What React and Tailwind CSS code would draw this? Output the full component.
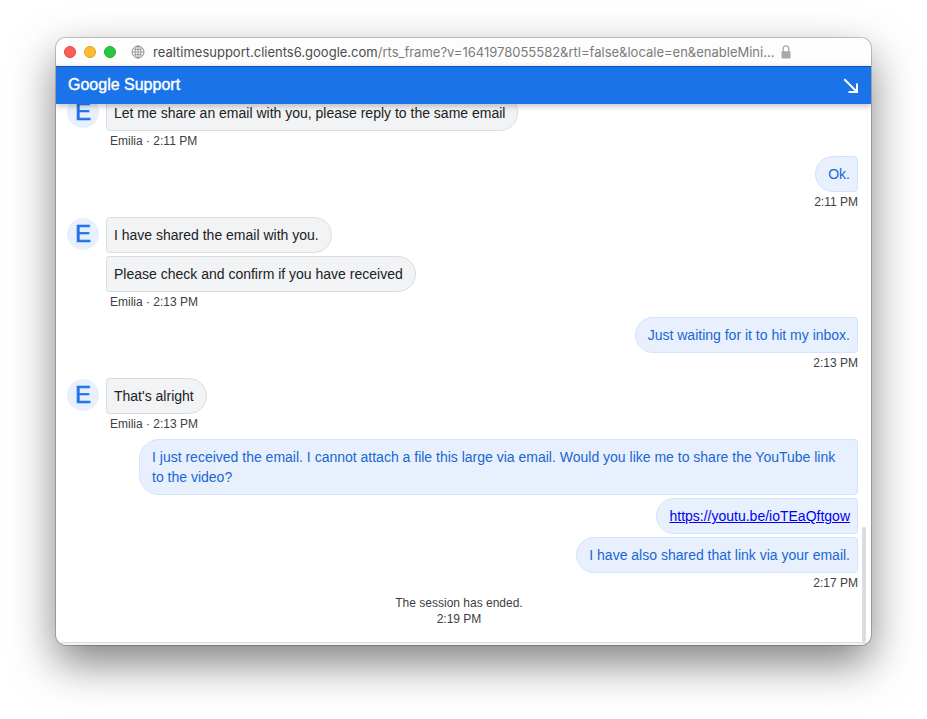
import { clsx } from "clsx";

const groups = [
    { from: "agent", messages: ["Let me share an email with you, please reply to the same email"], time: "2:11 PM" },
    { from: "user", messages: ["Ok."], time: "2:11 PM" },
    {
        from: "agent",
        messages: ["I have shared the email with you.", "Please check and confirm if you have received"],
        time: "2:13 PM",
    },
    { from: "user", messages: ["Just waiting for it to hit my inbox."], time: "2:13 PM" },
    { from: "agent", messages: ["That's alright"], time: "2:13 PM" },
    {
        from: "user",
        messages: [
            "I just received the email. I cannot attach a file this large via email. Would you like me to share the YouTube link to\u00a0the video?",
            "https://youtu.be/ioTEaQftgow",
            "I have also shared that link via your email.",
        ],
        time: "2:17 PM",
    },
];

const GlobeIcon = () => (
    <svg className="size-[14px] shrink-0" viewBox="0 0 14 14" fill="none" stroke="#858585" aria-hidden="true">
        <circle cx="7" cy="7" r="6" strokeWidth="0.9" />
        <ellipse cx="7" cy="7" rx="2.9" ry="6" strokeWidth="0.8" />
        <path d="M7 1v12M1 7h12M2.3 3.7c2.8 1.2 6.6 1.2 9.4 0M2.3 10.3c2.8-1.2 6.6-1.2 9.4 0" strokeWidth="0.8" />
    </svg>
);

const LockIcon = () => (
    <svg className="h-[14px] w-[10px] shrink-0" viewBox="0 0 10 14" aria-hidden="true">
        <path d="M2.2 7V4a2.8 3.1 0 0 1 5.6 0v3" fill="none" stroke="#a9a9a9" strokeWidth="1.3" />
        <rect x="0.5" y="6.3" width="9" height="7.2" rx="1" fill="#a9a9a9" />
    </svg>
);

const TitleBar = () => (
    <div className="flex h-7 shrink-0 items-center bg-[#fdfdfd] px-2">
        <div className="flex shrink-0 gap-2">
            <button aria-label="Close" className="size-3 rounded-full border border-[#e0443e] bg-[#ff5f57]" />
            <button aria-label="Minimize" className="size-3 rounded-full border border-[#dfa023] bg-[#febc2e]" />
            <button aria-label="Zoom" className="size-3 rounded-full border border-[#1dad2b] bg-[#28c840]" />
        </div>
        <div className="ml-[15px] flex min-w-0 items-center">
            <GlobeIcon />
            <p className="ml-2 truncate pt-px font-['Inter',sans-serif] text-[13px] text-[#7b7b7b]">
                <span className="text-[#4c4c4c]">realtimesupport.clients6.google.com</span>
                /rts_frame?v=1641978055582&amp;rtl=false&amp;locale=en&amp;enableMini...
            </p>
            <span className="ml-[7px]">
                <LockIcon />
            </span>
        </div>
    </div>
);

const Header = () => (
    <header className="relative z-10 flex h-[38px] shrink-0 items-center justify-between border-t border-[#0b50b8] bg-[#1a73e8] px-3 text-white shadow-[0_2px_6px_rgba(0,0,0,0.25)]">
        <h1 className="pb-[2px] text-[16px] leading-5 [-webkit-text-stroke:0.4px_white]">Google Support</h1>
        <button aria-label="Minimize chat">
            <svg className="size-4" viewBox="0 0 16 16" fill="none" stroke="currentColor" strokeWidth="2">
                <path d="M1.3 1.3l12.5 12.5M5.5 14H15M14 14.5V5.5" />
            </svg>
        </button>
    </header>
);

const Bubble = ({ text, mine }) => (
    <div
        className={clsx(
            "border py-[7px] text-[14px] leading-5",
            mine
                ? "rounded-l-[20px] rounded-r-[4px] border-[#d2e3fc] bg-[#e8f0fe] pr-[7px] pl-3 text-[#1967d2]"
                : "rounded-l-[4px] rounded-r-[20px] border-[#dadce0] bg-[#f1f3f4] pr-3 pl-[7px] text-[#202124]"
        )}
    >
        {text.startsWith("https://") ? (
            <a href={text} className="text-[#0000ee] underline">
                {text}
            </a>
        ) : (
            text
        )}
    </div>
);

const MessageGroup = ({ group }) => {
    const mine = group.from === "user";

    return (
        <div className={clsx("flex items-start gap-[7px]", mine && "justify-end pl-[72px]")}>
            {!mine && (
                <div className="mt-px flex size-8 shrink-0 items-center justify-center rounded-full bg-[#e8f0fe] text-[24px] leading-8 text-[#1a73e8] [-webkit-text-stroke:0.6px_#1a73e8]">
                    E
                </div>
            )}
            <div>
                <div className={clsx("flex flex-col gap-[3px]", mine ? "items-end" : "items-start")}>
                    {group.messages.map((text) => (
                        <Bubble key={text} text={text} mine={mine} />
                    ))}
                </div>
                <p className={clsx("mt-[2px] text-[12px] leading-4 text-[#3c4043]", mine ? "text-right" : "pl-1")}>
                    {mine ? group.time : `Emilia · ${group.time}`}
                </p>
            </div>
        </div>
    );
};

const App = () => {
    return (
        <div className="h-screen bg-white px-14 pt-[38px] pb-[74px] font-['Liberation_Sans',Arial,sans-serif]">
            <main className="flex h-full flex-col overflow-hidden rounded-[10px] bg-white shadow-[0_0_0_1px_rgba(0,0,0,0.2),0_18px_44px_rgba(0,0,0,0.5)]">
                <TitleBar />
                <Header />
                <div className="relative flex min-h-0 flex-1 flex-col justify-end overflow-hidden pr-[13px] pb-[15px] pl-[11px]">
                    <div className="flex shrink-0 flex-col gap-[7px]">
                        {groups.map((group, index) => (
                            <MessageGroup key={index} group={group} />
                        ))}
                    </div>
                    <div className="shrink-0 pt-1 pr-[7px] text-center text-[12px] leading-4 text-[#3c4043]">
                        <p>The session has ended.</p>
                        <p>2:19 PM</p>
                    </div>
                    <div className="absolute right-[5px] bottom-0 h-[115px] w-1 rounded-full bg-[#dadce0]" />
                </div>
                <div className="h-[3px] shrink-0 border-t border-[#dadce0] bg-[#f1f3f4]" />
            </main>
        </div>
    );
};

export default App;
